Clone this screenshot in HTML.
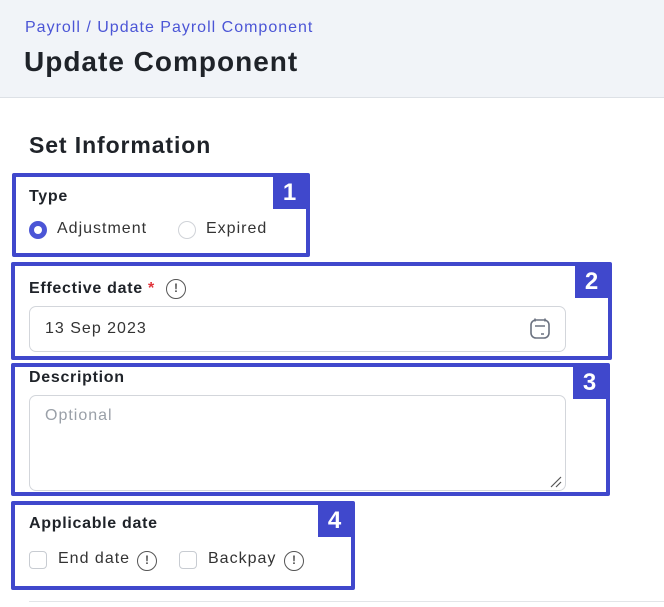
<!DOCTYPE html>
<html><head><meta charset="utf-8"><style>
*{box-sizing:border-box;margin:0;padding:0}
body{width:664px;height:607px;overflow:hidden;background:#fff;font-family:"Liberation Sans",sans-serif;color:#1f2329;position:relative}
.hdr{position:absolute;left:0;top:0;width:664px;height:98px;background:#f1f4f8;border-bottom:1px solid #dde1e6}
.crumb{position:absolute;left:25px;top:19px;font-size:16px;color:#4b55d6;letter-spacing:1px}
.title{position:absolute;left:24px;top:46px;font-size:28px;font-weight:bold;color:#1f2329;letter-spacing:1px}
.h2{position:absolute;left:29px;top:132px;font-size:23px;font-weight:bold;letter-spacing:0.9px}
.box{position:absolute;border:4px solid #4048cc;border-radius:2px}
.num{position:absolute;right:0;top:0;width:33px;height:32px;background:#4048cc;color:#fff;font-weight:bold;font-size:24px;text-align:center;line-height:32px}
.lbl{position:absolute;font-size:16px;font-weight:bold;letter-spacing:0.7px}
.t{position:absolute;font-size:16px;color:#333;letter-spacing:1px}
.input{position:absolute;border:1px solid #d3d6db;border-radius:7px;background:#fff}
.info{position:absolute;width:20px;height:20px;border:1.6px solid #555;border-radius:50%;font-size:12px;font-weight:bold;text-align:center;line-height:17px;color:#555}
.cb{position:absolute;width:18px;height:18px;border:1px solid #c8ccd2;border-radius:4px}
</style></head><body>
<div class="hdr"><div class="crumb">Payroll / Update Payroll Component</div><div class="title">Update Component</div></div>
<div class="h2">Set Information</div>

<div class="box" style="left:12px;top:173px;width:298px;height:84px"><div class="num">1</div></div>
<div class="lbl" style="left:29px;top:188px">Type</div>
<div style="position:absolute;left:29px;top:221px;width:18px;height:18px;border-radius:50%;background:#4b55d6"><div style="position:absolute;left:5px;top:5px;width:8px;height:8px;border-radius:50%;background:#fff"></div></div>
<div class="t" style="left:57px;top:220px">Adjustment</div>
<div style="position:absolute;left:178px;top:221px;width:18px;height:18px;border-radius:50%;border:1px solid #d0d3d8"></div>
<div class="t" style="left:206px;top:220px">Expired</div>

<div class="box" style="left:11px;top:262px;width:601px;height:98px"><div class="num">2</div></div>
<div class="lbl" style="left:29px;top:280px">Effective date <span style="color:#e0343b">*</span></div>
<div class="info" style="left:166px;top:279px">!</div>
<div class="input" style="left:29px;top:306px;width:537px;height:46px"></div>
<div class="t" style="left:45px;top:320px">13 Sep 2023</div>
<svg style="position:absolute;left:529px;top:317px" width="22" height="24" viewBox="0 0 22 24" fill="none" stroke="#6b7280" stroke-width="1.6"><rect x="2" y="3" width="18" height="18" rx="5"/><path d="M6 1.5v3M16 1.5v3M6 9h10M12 17h3"/></svg>

<div class="box" style="left:11px;top:363px;width:599px;height:133px"><div class="num">3</div></div>
<div class="lbl" style="left:29px;top:369px">Description</div>
<div class="input" style="left:29px;top:395px;width:537px;height:96px"></div>
<div class="t" style="left:45px;top:407px;color:#9aa0a8">Optional</div>
<svg style="position:absolute;left:550px;top:476px" width="12" height="12" stroke="#555" stroke-width="1.2"><path d="M1 11L11 1M6 11L11 6"/></svg>

<div class="box" style="left:11px;top:501px;width:344px;height:89px"><div class="num">4</div></div>
<div class="lbl" style="left:29px;top:515px">Applicable date</div>
<div class="cb" style="left:29px;top:551px"></div>
<div class="t" style="left:58px;top:550px">End date</div>
<div class="info" style="left:137px;top:551px">!</div>
<div class="cb" style="left:179px;top:551px"></div>
<div class="t" style="left:208px;top:550px">Backpay</div>
<div class="info" style="left:284px;top:551px">!</div>
<div style="position:absolute;left:29px;top:601px;width:635px;height:1px;background:#e3e5e8"></div>
</body></html>
